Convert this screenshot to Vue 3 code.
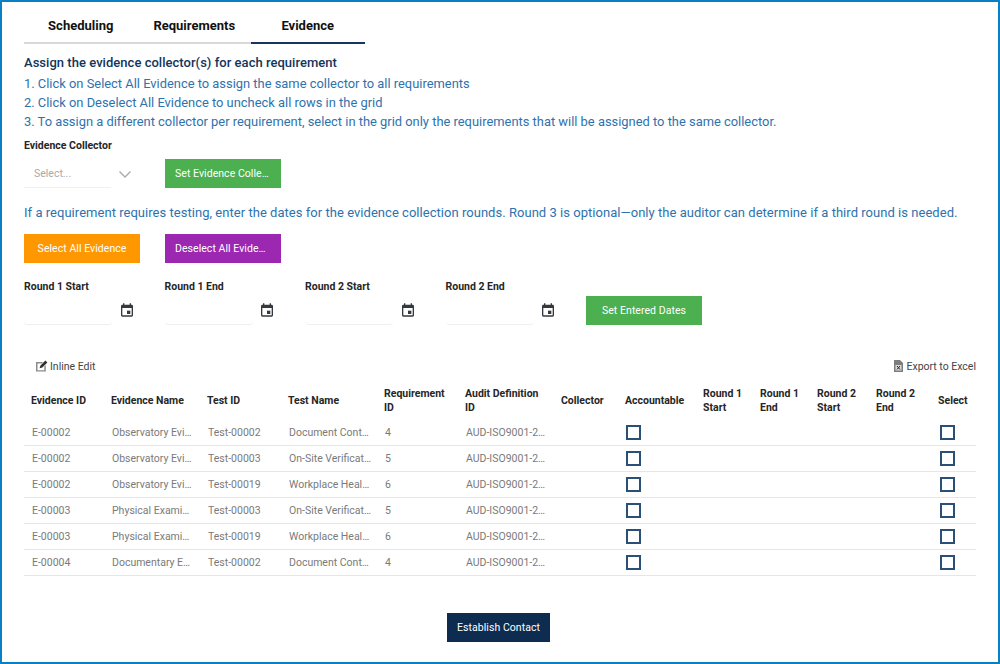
<template>
  <div class="frame">
    <div class="tabs">
      <div v-for="tab in tabs" :key="tab" class="tab" :class="{ active: tab === 'Evidence' }">{{ tab }}</div>
    </div>

    <h2 class="heading">Assign the evidence collector(s) for each requirement</h2>
    <p class="step">1. Click on Select All Evidence to assign the same collector to all requirements</p>
    <p class="step">2. Click on Deselect All Evidence to uncheck all rows in the grid</p>
    <p class="step">3. To assign a different collector per requirement, select in the grid only the requirements that will be assigned to the same collector.</p>

    <div class="field-label collector-label">Evidence Collector</div>
    <div class="collector-row">
      <div class="select-box">
        <span class="placeholder">Select...</span>
        <svg width="14" height="14" viewBox="0 0 14 14">
          <path d="M1.5 4.5 7 10l5.500-5.500" fill="none" stroke="#a8a8a8" stroke-width="1.300" />
        </svg>
      </div>
      <button class="btn green truncated">Set Evidence Colle…</button>
    </div>

    <p class="step note">If a requirement requires testing, enter the dates for the evidence collection rounds. Round 3 is optional—only the auditor can determine if a third round is needed.</p>

    <div class="select-row">
      <button class="btn orange">Select All Evidence</button>
      <button class="btn purple truncated">Deselect All Evide…</button>
    </div>

    <div class="dates-row">
      <div v-for="round in rounds" :key="round" class="date-field">
        <div class="field-label">{{ round }}</div>
        <div class="date-input-row">
          <div class="date-input"></div>
          <svg class="calendar" width="16" height="16" viewBox="0 0 24 24">
            <path fill="#33393f" d="M19 4h-1V2h-2v2H8V2H6v2H5c-1.100 0-2 .900-2 2v14c0 1.100.900 2 2 2h14c1.100 0 2-.900 2-2V6c0-1.100-.900-2-2-2zm0 16H5V9h14v11z" />
            <rect x="12" y="13" width="5" height="5" fill="#33393f" />
          </svg>
        </div>
      </div>
      <button class="btn green dates-btn">Set Entered Dates</button>
    </div>

    <div class="toolbar">
      <div class="tool edit-tool">
        <svg class="tool-icon" width="12" height="12" viewBox="0 0 12 12">
          <path d="M0 2h7L5.800 3.400H1.500v6.800h6.800V6.600l1.500-1.500V11.600H0z" fill="#8c8c8c" />
          <path d="M3.600 8.300 4.300 5.700 9.400.600l2 2L6.300 7.600z" fill="#2f2f2f" />
        </svg>
        <span>Inline Edit</span>
      </div>
      <div class="tool">
        <svg class="tool-icon" width="9" height="12" viewBox="0 0 9 12">
          <path d="M0 0H6L9 3V12H0z" fill="#7d7d7d" />
          <rect x="1.500" y="5" width="6" height="5.500" fill="#dcdcdc" />
          <path d="M3 6 6 9.500M6 6 3 9.500" stroke="#222" stroke-width="1" />
        </svg>
        <span>Export to Excel</span>
      </div>
    </div>

    <table class="grid">
      <colgroup>
        <col v-for="(w, i) in colWidths" :key="i" :style="{ width: w + 'px' }" />
      </colgroup>
      <thead>
        <tr>
          <th v-for="col in columns" :key="col">{{ col }}</th>
        </tr>
      </thead>
      <tbody>
        <tr v-for="(row, i) in rows" :key="i">
          <td v-for="(cell, j) in row" :key="j">{{ cell }}</td>
          <td class="narrow"><span class="check"></span></td>
          <td></td>
          <td></td>
          <td></td>
          <td></td>
          <td class="narrow"><span class="check last"></span></td>
        </tr>
      </tbody>
    </table>

    <div class="footer">
      <button class="btn navy">Establish Contact</button>
    </div>
  </div>
</template>

<script setup>
const tabs = ['Scheduling', 'Requirements', 'Evidence']
const rounds = ['Round 1 Start', 'Round 1 End', 'Round 2 Start', 'Round 2 End']

const columns = [
  'Evidence ID', 'Evidence Name', 'Test ID', 'Test Name', 'Requirement ID', 'Audit Definition ID',
  'Collector', 'Accountable', 'Round 1 Start', 'Round 1 End', 'Round 2 Start', 'Round 2 End', 'Select'
]
const colWidths = [80, 96, 81, 96, 81, 96, 64, 78, 57, 57, 59, 62, 45]

const rows = [
  ['E-00002', 'Observatory Evi…', 'Test-00002', 'Document Cont…', '4', 'AUD-ISO9001-2…', ''],
  ['E-00002', 'Observatory Evi…', 'Test-00003', 'On-Site Verificat…', '5', 'AUD-ISO9001-2…', ''],
  ['E-00002', 'Observatory Evi…', 'Test-00019', 'Workplace Heal…', '6', 'AUD-ISO9001-2…', ''],
  ['E-00003', 'Physical Exami…', 'Test-00003', 'On-Site Verificat…', '5', 'AUD-ISO9001-2…', ''],
  ['E-00003', 'Physical Exami…', 'Test-00019', 'Workplace Heal…', '6', 'AUD-ISO9001-2…', ''],
  ['E-00004', 'Documentary E…', 'Test-00002', 'Document Cont…', '4', 'AUD-ISO9001-2…', '']
]
</script>

<style>
html,
body {
  margin: 0;
  background: #fff;
}
</style>

<style scoped>
.frame {
  box-sizing: border-box;
  width: 1000px;
  height: 664px;
  padding: 7px 22px 0;
  border: 2px solid #0a80c4;
  font-family: Roboto, "Liberation Sans", sans-serif;
  color: #333;
  overflow: hidden;
}

.tabs {
  display: flex;
}

.tab {
  width: 113.5px;
  height: 35px;
  box-sizing: border-box;
  padding-top: 8px;
  border-bottom: 2px solid #d9d9d9;
  text-align: center;
  font-size: 13px;
  font-weight: 700;
  color: #111;
  line-height: 18px;
}

.tab.active {
  border-bottom-color: #16365f;
}

.heading {
  margin: 10px 0 3px;
  font-size: 13px;
  font-weight: 500;
  line-height: 18px;
  color: #12355b;
  letter-spacing: 0.03px;
}

.step {
  margin: 2px 0 0;
  font-size: 12.9px;
  line-height: 17px;
  color: #2e72ad;
}

.field-label {
  font-size: 10.5px;
  font-weight: 700;
  line-height: 14px;
  color: #262626;
}

.collector-label {
  margin-top: 9px;
}

.collector-row {
  display: flex;
  margin-top: 6px;
}

.select-box {
  display: flex;
  align-items: center;
  box-sizing: border-box;
  width: 141px;
  height: 29px;
  padding-left: 10px;
  background: linear-gradient(#f0f0f0, #f0f0f0) 0 100% / 87px 1px no-repeat;
}

.placeholder {
  width: 84px;
  font-size: 10.5px;
  color: #a9a9a9;
}

.btn {
  border: 0;
  border-radius: 0;
  padding: 0;
  font-family: inherit;
  font-size: 10.5px;
  letter-spacing: 0.05px;
  color: #fff;
}

.btn.truncated {
  padding-left: 10px;
  text-align: left;
}

.green {
  background: #4caf50;
}

.collector-row .btn,
.select-row .btn,
.dates-btn {
  width: 116px;
  height: 29px;
}

.note {
  margin-top: 16px;
  font-size: 13px;
  letter-spacing: 0.035px;
}

.select-row {
  display: flex;
  gap: 25px;
  margin-top: 13px;
}

.orange {
  background: #ff9800;
}

.purple {
  background: #9c27b0;
}

.dates-row {
  display: flex;
  align-items: flex-end;
  margin-top: 17px;
}

.date-field {
  width: 140.5px;
}

.date-input-row {
  display: flex;
  align-items: center;
  gap: 6.5px;
  margin-top: 3px;
}

.date-input {
  width: 88px;
  height: 28px;
  box-sizing: border-box;
  border-bottom: 1px solid #efefef;
  border-radius: 0 0 4px 4px;
}

.calendar {
  margin-top: -2px;
}

.toolbar {
  display: flex;
  justify-content: space-between;
  margin-top: 35px;
  padding-left: 12px;
  font-size: 10.5px;
  line-height: 14px;
  color: #444;
}

.tool {
  display: flex;
  align-items: center;
  gap: 3px;
}

.edit-tool {
  gap: 2px;
}

.tool-icon {
  margin-top: -3px;
}

.grid {
  width: 952px;
  margin-top: 8px;
  border-collapse: collapse;
  table-layout: fixed;
}

th {
  height: 38px;
  padding: 0 7px;
  text-align: left;
  vertical-align: middle;
  font-size: 10.5px;
  font-weight: 700;
  line-height: 14.5px;
  color: #262626;
}

td {
  height: 25px;
  padding: 0 8px;
  border-bottom: 1px solid #e6e6e6;
  font-size: 10.5px;
  color: #7a7a7a;
  white-space: nowrap;
  overflow: hidden;
}

.narrow {
  overflow: visible;
}

.check {
  display: block;
  box-sizing: border-box;
  width: 15px;
  height: 15px;
  border: 2px solid #2a5078;
  background: #fff;
}

.check.last {
  margin-left: 1px;
}

.footer {
  display: flex;
  justify-content: center;
  margin-top: 37px;
  padding-right: 3px;
}

.navy {
  width: 103px;
  height: 29px;
  background: #0d2c4f;
}
</style>
